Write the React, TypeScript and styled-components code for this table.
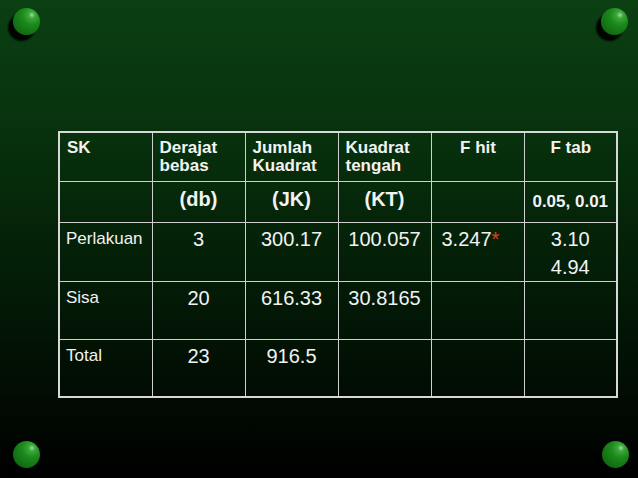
import { createGlobalStyle, styled } from 'styled-components';

const GlobalStyle = createGlobalStyle`
  html, body {
    margin: 0;
    padding: 0;
    background: #000;
  }
`;

type Corner = 'tl' | 'tr' | 'bl' | 'br';

const ballPos: Record<Corner, string> = {
  tl: 'top: 8px; left: 13px;',
  tr: 'top: 8px; right: 10px;',
  bl: 'bottom: 10px; left: 13px;',
  br: 'bottom: 10px; right: 9px;',
};

const rows = [
  { label: 'Perlakuan', db: '3', jk: '300.17', kt: '100.057', fhit: '3.247', star: true, ftab: ['3.10', '4.94'] },
  { label: 'Sisa', db: '20', jk: '616.33', kt: '30.8165', fhit: '', star: false, ftab: [] },
  { label: 'Total', db: '23', jk: '916.5', kt: '', fhit: '', star: false, ftab: [] },
];

const App = () => {
  return (
    <>
      <GlobalStyle />
      <S.Slide>
        {(['tl', 'tr', 'bl', 'br'] as Corner[]).map((c) => (
          <S.Ball key={c} $corner={c} />
        ))}
        <S.Table>
          <colgroup>
            {Array.from({ length: 6 }).map((_, i) => (
              <col key={i} style={{ width: 93 }} />
            ))}
          </colgroup>
          <tbody>
            <S.HeadRow>
              <S.HeadCell>SK</S.HeadCell>
              <S.HeadCell>Derajat<br />bebas</S.HeadCell>
              <S.HeadCell>Jumlah<br />Kuadrat</S.HeadCell>
              <S.HeadCell>Kuadrat<br />tengah</S.HeadCell>
              <S.HeadCell $center>F hit</S.HeadCell>
              <S.HeadCell $center>F tab</S.HeadCell>
            </S.HeadRow>
            <S.AbbrRow>
              <S.AbbrCell />
              <S.AbbrCell>(db)</S.AbbrCell>
              <S.AbbrCell>(JK)</S.AbbrCell>
              <S.AbbrCell>(KT)</S.AbbrCell>
              <S.AbbrCell />
              <S.AbbrCell $small>0.05, 0.01</S.AbbrCell>
            </S.AbbrRow>
            {rows.map((r) => (
              <S.DataRow key={r.label}>
                <S.LabelCell>{r.label}</S.LabelCell>
                <S.ValueCell>{r.db}</S.ValueCell>
                <S.ValueCell>{r.jk}</S.ValueCell>
                <S.ValueCell>{r.kt}</S.ValueCell>
                <S.ValueCell $left>
                  {r.fhit}
                  {r.star && <S.Star>*</S.Star>}
                </S.ValueCell>
                <S.ValueCell>
                  {r.ftab.map((v, i) => (
                    <div key={i}>{v}</div>
                  ))}
                </S.ValueCell>
              </S.DataRow>
            ))}
          </tbody>
        </S.Table>
      </S.Slide>
    </>
  );
};

const S = {
  Slide: styled.div`
    position: relative;
    box-sizing: border-box;
    width: 638px;
    height: 478px;
    padding: 131px 0 0 58px;
    overflow: hidden;

    background: linear-gradient(to bottom, #0b4013 0%, #07300c 30%, #031a06 62%, #000 100%);

    font-family: 'Liberation Sans', Arial, sans-serif;
    color: #f2f2f2;
  `,

  Ball: styled.div<{ $corner: Corner }>`
    position: absolute;
    ${({ $corner }) => ballPos[$corner]}

    width: 27px;
    height: 27px;
    border-radius: 50%;

    background: radial-gradient(circle at 70% 26%, #9be09b 0%, #3aa83a 12%, #1c8a1c 35%, #127012 70%, #0c5c0c 100%);
    box-shadow: -5px 6px 2px rgba(0, 0, 0, 0.95);
  `,

  Table: styled.table`
    width: 560px;
    table-layout: fixed;
    border-collapse: collapse;
    border: 2px solid #d8d8d8;

    td {
      box-sizing: border-box;
      border: 1px solid #cfcfcf;
      vertical-align: top;
    }
  `,

  HeadRow: styled.tr`
    height: 49px;
  `,

  HeadCell: styled.td<{ $center?: boolean }>`
    padding: 6px 6px 0 7px;

    font-size: 17px;
    font-weight: bold;
    line-height: 18px;
    text-align: ${({ $center }) => ($center ? 'center' : 'left')};
  `,

  AbbrRow: styled.tr`
    height: 41px;
  `,

  AbbrCell: styled.td<{ $small?: boolean }>`
    padding: ${({ $small }) => ($small ? '8px 0 0' : '5px 0 0')};

    font-size: ${({ $small }) => ($small ? '17px' : '20px')};
    font-weight: bold;
    line-height: 24px;
    text-align: center;
  `,

  DataRow: styled.tr`
    height: 58px;
  `,

  LabelCell: styled.td`
    padding: 6px 0 0 6px;

    font-size: 17px;
    line-height: 20px;
  `,

  ValueCell: styled.td<{ $left?: boolean }>`
    padding: ${({ $left }) => ($left ? '2px 0 0 10px' : '2px 0 0')};

    font-size: 20px;
    line-height: 28px;
    text-align: ${({ $left }) => ($left ? 'left' : 'center')};
  `,

  Star: styled.span`
    color: #e8401c;
  `,
};

export default App;
